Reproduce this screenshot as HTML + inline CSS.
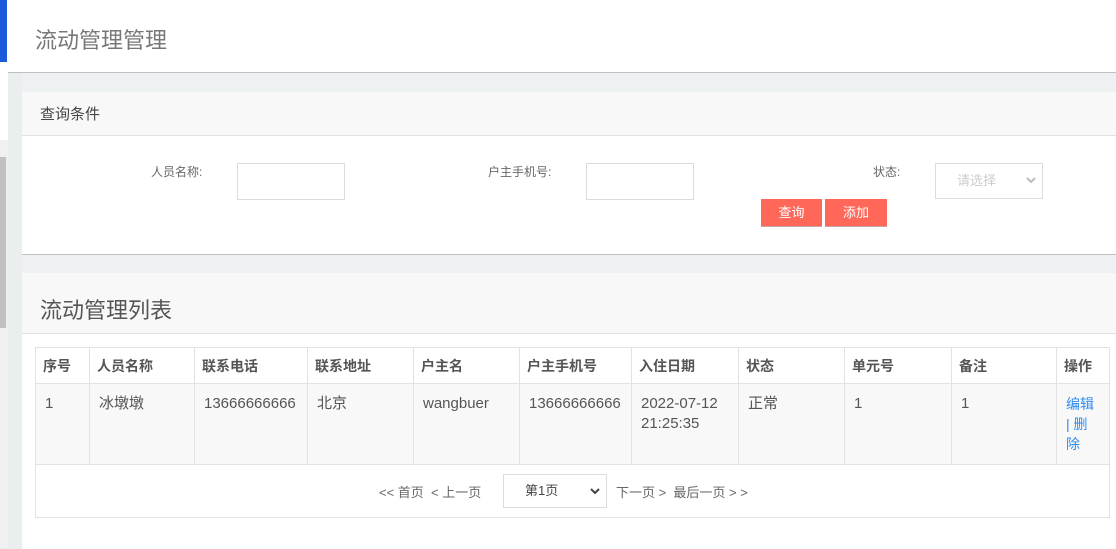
<!DOCTYPE html>
<html><head><meta charset="utf-8"><style>
*{margin:0;padding:0;box-sizing:border-box}
body{width:1116px;height:549px;overflow:hidden;background:#eef1f2;font-family:"Liberation Sans","Noto Sans CJK SC",sans-serif;position:relative;color:#555}
.a{position:absolute}
.inp{position:absolute;border:1px solid #dcdcdc;background:#fff}
.btn{position:absolute;background:#ff6859;color:#fff;font-size:13px;text-align:center;line-height:27px;height:28px;border-bottom:1px solid #c9a6a6}
table{position:absolute;left:35px;top:347px;border-collapse:collapse;font-size:14px;color:#555}
td,th{border:1px solid #e2e2e2;text-align:left;vertical-align:top;padding:0 7px}
th{height:36px;vertical-align:middle;font-weight:bold;color:#555}
.r td{background:#f8f8f8;height:81px;padding-top:10px;line-height:20px;font-size:15px;padding-left:9px}
.chev{position:absolute;right:5px;top:12px}
</style></head><body>
<div class="a" style="left:0;top:0;width:8px;height:549px;background:#f0f0f0"></div>
<div class="a" style="left:0;top:0;width:8px;height:140px;background:#fff"></div>
<div class="a" style="left:0;top:0;width:7px;height:62px;background:#1a5adb"></div>
<div class="a" style="left:0;top:157px;width:6px;height:171px;background:#c1c1c1"></div>
<div class="a" style="left:8px;top:0;width:14px;height:549px;background:#eaeeef"></div>
<div class="a" style="left:8px;top:0;width:1108px;height:73px;background:#fff;border-bottom:1px solid #c0c0c0"></div>
<div class="a" style="left:35px;top:23px;font-size:22px;color:#777">流动管理管理</div>

<div class="a" style="left:22px;top:92px;width:1094px;height:163px;background:#fff;border-bottom:1px solid #c0c0c0"></div>
<div class="a" style="left:22px;top:92px;width:1094px;height:44px;background:#f8f8f8;border-bottom:1px solid #e2e2e2"></div>
<div class="a" style="left:40px;top:103px;font-size:15px;color:#444">查询条件</div>

<div class="a" style="left:151px;top:163px;font-size:12px;color:#666">人员名称:</div>
<div class="inp" style="left:237px;top:163px;width:108px;height:37px"></div>
<div class="a" style="left:488px;top:163px;font-size:12px;color:#666">户主手机号:</div>
<div class="inp" style="left:586px;top:163px;width:108px;height:37px"></div>
<div class="a" style="left:873px;top:163px;font-size:12px;color:#666">状态:</div>
<div class="inp" style="left:935px;top:163px;width:108px;height:36px;font-size:13px;color:#ccc;line-height:34px;padding-left:21px">请选择<svg class="chev" width="12" height="8" viewBox="0 0 12 8"><path d="M2 2l4 4 4-4" fill="none" stroke="#bbb" stroke-width="2"/></svg></div>
<div class="btn" style="left:761px;top:199px;width:61px">查询</div>
<div class="btn" style="left:825px;top:199px;width:62px">添加</div>

<div class="a" style="left:22px;top:273px;width:1094px;height:276px;background:#fff"></div>
<div class="a" style="left:22px;top:273px;width:1094px;height:61px;background:#f8f8f8;border-bottom:1px solid #e2e2e2"></div>
<div class="a" style="left:40px;top:293px;font-size:22px;color:#555">流动管理列表</div>

<table>
<tr><th style="width:54px">序号</th><th style="width:105px">人员名称</th><th style="width:113px">联系电话</th><th style="width:106px">联系地址</th><th style="width:106px">户主名</th><th style="width:112px">户主手机号</th><th style="width:107px">入住日期</th><th style="width:106px">状态</th><th style="width:107px">单元号</th><th style="width:105px">备注</th><th style="width:53px">操作</th></tr>
<tr class="r"><td>1</td><td>冰墩墩</td><td>13666666666</td><td>北京</td><td>wangbuer</td><td>13666666666</td><td>2022-07-12<br>21:25:35</td><td>正常</td><td>1</td><td>1</td><td style="color:#2d8cf0;font-size:14px">编辑<br>| 删<br>除</td></tr>
<tr><td colspan="11" style="height:53px;background:#fff"></td></tr>
</table>
<div class="a" style="left:379px;top:482px;font-size:13px;color:#666">&lt;&lt; 首页 &nbsp;&lt; 上一页</div>
<div class="inp" style="left:503px;top:474px;width:104px;height:34px;font-size:13px;color:#444;line-height:32px;padding-left:21px">第1页<svg class="chev" width="12" height="8" viewBox="0 0 12 8"><path d="M2 2l4 4 4-4" fill="none" stroke="#444" stroke-width="2"/></svg></div>
<div class="a" style="left:616px;top:482px;font-size:13px;color:#666">下一页 &gt; &nbsp;最后一页 &gt; &gt;</div>
</body></html>
